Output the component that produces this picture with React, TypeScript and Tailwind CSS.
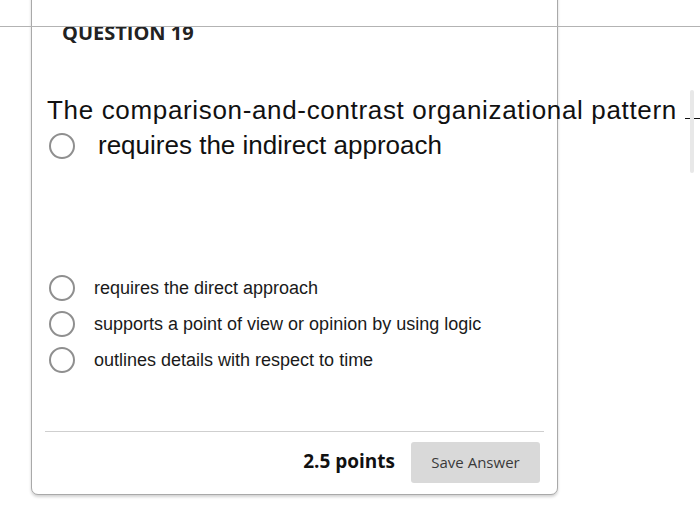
const options = [
  "requires the direct approach",
  "supports a point of view or opinion by using logic",
  "outlines details with respect to time",
];

function Radio() {
  return <span className="block h-[26px] w-[26px] shrink-0 rounded-full border-2 border-[#8f8f8f] bg-white" />;
}

export default function App() {
  return (
    <div className="relative h-[522px] w-[700px] overflow-hidden bg-white">
      <div className="ml-[31px] mt-[-10px] w-[527px] rounded-b-[7px] border border-[#a9a9a9] bg-white shadow-[0_2px_3px_rgba(0,0,0,0.18)]">
        <div
          className="pl-[30px] pt-[28px] text-[20px] font-bold leading-[27px] text-[#222]"
          style={{ fontFamily: '"Open Sans", sans-serif' }}
        >
          QUESTION 19
        </div>

        <div className="mt-[47px] text-[26px] leading-[35px] text-[#111]" style={{ fontFamily: '"Liberation Sans", Arial, sans-serif' }}>
          <div className="whitespace-nowrap pl-[15px] tracking-[0.66px]">
            The comparison-and-contrast organizational pattern <span className="inline-block w-[20px] border-b-[1.5px] border-[#111] align-baseline" />
          </div>
          <div className="flex items-center pl-[17px]">
            <Radio />
            <span className="ml-[23px] whitespace-nowrap">requires the indirect approach</span>
          </div>
        </div>

        <div className="mt-[107px] flex flex-col text-[18px] text-[#1a1a1a]" style={{ fontFamily: '"Liberation Sans", Arial, sans-serif' }}>
          {options.map((opt) => (
            <label key={opt} className="flex h-[36px] items-center pl-[17px]">
              <Radio />
              <span className="ml-[19px]">{opt}</span>
            </label>
          ))}
        </div>

        <div className="mx-[13px] mt-[53px] border-t border-[#cfcfcf]" />

        <div className="flex items-center justify-end gap-[16px] pb-[11px] pr-[17px] pt-[10px]" style={{ fontFamily: '"Open Sans", sans-serif' }}>
          <span className="mb-[2px] text-[19px] font-bold text-[#111]">2.5 points</span>
          <button type="button" className="h-[41px] w-[129px] rounded-[3px] bg-[#d9d9d9] text-[15px] text-[#3a3a3a]">
            Save Answer
          </button>
        </div>
      </div>

      <div className="absolute left-0 right-0 top-[26px] h-px bg-[#b3b3b3]" />
      <div className="absolute left-[690px] top-[90px] h-[83px] w-[4px] rounded-full bg-[#e8e8e8]" />
    </div>
  );
}
